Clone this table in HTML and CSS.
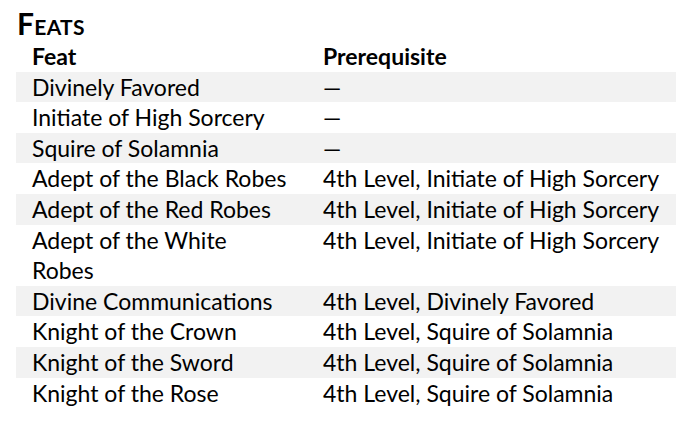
FILE: index.html
```html
<!DOCTYPE html>
<html>
<head>
<meta charset="utf-8">
<link rel="stylesheet" href="styles.css">
</head>
<body>
<div class="page">
  <h1 class="title">Feats</h1>
  <table class="feats">
    <colgroup><col class="c1"><col class="c2"></colgroup>
    <thead>
      <tr><th>Feat</th><th>Prerequisite</th></tr>
    </thead>
    <tbody>
      <tr><td>Divinely Favored</td><td>—</td></tr>
      <tr><td>Initiate of High Sorcery</td><td>—</td></tr>
      <tr><td>Squire of Solamnia</td><td>—</td></tr>
      <tr><td>Adept of the Black Robes</td><td>4th Level, Initiate of High Sorcery</td></tr>
      <tr><td>Adept of the Red Robes</td><td>4th Level, Initiate of High Sorcery</td></tr>
      <tr><td>Adept of the White Robes</td><td>4th Level, Initiate of High Sorcery</td></tr>
      <tr><td>Divine Communications</td><td>4th Level, Divinely Favored</td></tr>
      <tr><td>Knight of the Crown</td><td>4th Level, Squire of Solamnia</td></tr>
      <tr><td>Knight of the Sword</td><td>4th Level, Squire of Solamnia</td></tr>
      <tr><td>Knight of the Rose</td><td>4th Level, Squire of Solamnia</td></tr>
    </tbody>
  </table>
</div>
</body>
</html>
```
FILE: styles.css
```css
html, body {
  margin: 0;
  padding: 0;
  background: #ffffff;
}
body {
  font-family: Lato, "Open Sans", sans-serif;
  color: #000;
}
.page {
  padding: 5px 18px 0 16px;
}
.title {
  margin: 0 0 0 1px;
  font-size: 30px;
  line-height: 36px;
  font-weight: 700;
  font-variant: small-caps;
  letter-spacing: 0.3px;
}
.feats {
  border-collapse: collapse;
  width: 660px;
  table-layout: fixed;
  font-size: 23px;
  line-height: 30.6px;
}
.c1 { width: 291px; }
.feats th, .feats td {
  padding: 0 16px;
  text-align: left;
  vertical-align: top;
}
.feats th {
  font-weight: 700;
}
.feats tbody tr:nth-child(odd) {
  background: #f2f2f2;
}
```
